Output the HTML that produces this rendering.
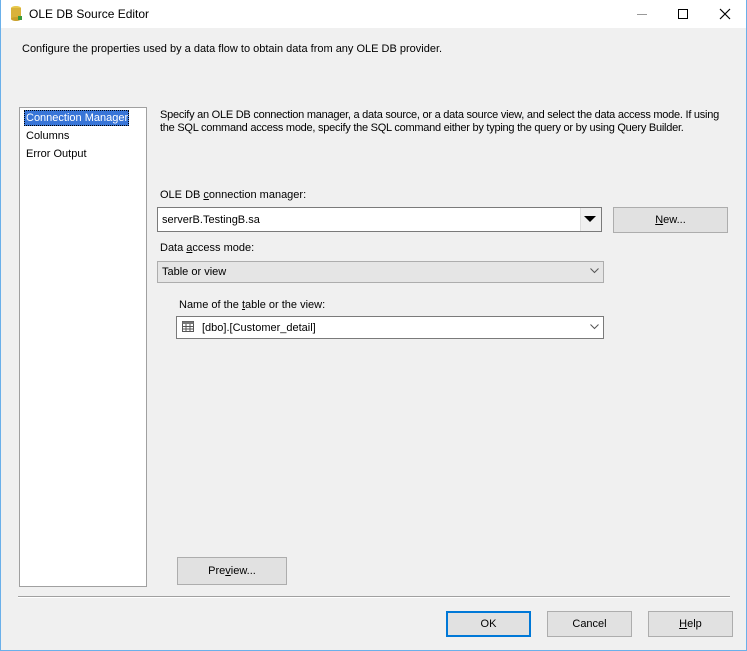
<!DOCTYPE html>
<html><head><style>
*{margin:0;padding:0;box-sizing:border-box}
body{width:747px;height:651px;overflow:hidden;background:#f0f0f0;font-family:"Liberation Sans",sans-serif;font-size:11px;color:#000;position:relative}
.a{position:absolute}
.t{position:absolute;white-space:nowrap}
.btn{position:absolute;background:#e1e1e1;border:1px solid #adadad;text-align:center;font-size:11px}
u{text-decoration:underline}
</style></head><body>
<div class="a" style="left:0;top:0;width:747px;height:651px;border:1px solid #6ab0ea;border-top:none"></div>
<div class="a" style="left:1px;top:0;width:745px;height:28px;background:#fff"></div>
<svg class="a" style="left:10px;top:5px" width="14" height="18" viewBox="0 0 14 18"><ellipse cx="6" cy="3" rx="5" ry="2" fill="#e8c84a"/><rect x="1" y="3" width="10" height="11" fill="#d9b23a"/><ellipse cx="6" cy="14" rx="5" ry="2" fill="#c9a02a"/><path d="M8 11h4v4h-4z" fill="#3a9a3a"/></svg>
<div class="t" style="left:29px;top:7px;font-size:12px">OLE DB Source Editor</div>
<div class="a" style="left:637px;top:14px;width:10px;height:1px;background:#999"></div>
<div class="a" style="left:678px;top:9px;width:10px;height:10px;border:1px solid #000"></div>
<svg class="a" style="left:719px;top:8px" width="12" height="12"><path d="M1 1L11 11M11 1L1 11" stroke="#000" stroke-width="1.2"/></svg>
<div class="t" style="left:22px;top:43px">Configure the properties used by a data flow to obtain data from any OLE DB provider.</div>
<div class="a" style="left:19px;top:107px;width:128px;height:480px;background:#fff;border:1px solid #a0a0a0"></div>
<div class="a" style="left:24px;top:110px;width:105px;height:16px;background:#3875d7;border:1px dotted #000"></div>
<div class="t" style="left:26px;top:112px;color:#fff">Connection Manager</div>
<div class="t" style="left:26px;top:130px">Columns</div>
<div class="t" style="left:26px;top:148px">Error Output</div>
<div class="t" style="left:160px;top:109px;letter-spacing:-0.25px">Specify an OLE DB connection manager, a data source, or a data source view, and select the data access mode. If using</div>
<div class="t" style="left:160px;top:122px;letter-spacing:-0.25px">the SQL command access mode, specify the SQL command either by typing the query or by using Query Builder.</div>
<div class="t" style="left:160px;top:189px">OLE DB <u>c</u>onnection manager:</div>
<div class="a" style="left:157px;top:207px;width:445px;height:25px;background:#fff;border:1px solid #7a7a7a"></div>
<div class="t" style="left:162px;top:214px">serverB.TestingB.sa</div>
<div class="a" style="left:580px;top:208px;width:21px;height:23px;background:#f0f0f0;border-left:1px solid #ddd"></div>
<svg class="a" style="left:584px;top:215px" width="12" height="8"><path d="M0 1h12L6 7z" fill="#000"/></svg>
<div class="btn" style="left:613px;top:207px;width:115px;height:26px;line-height:24px"><u>N</u>ew...</div>
<div class="t" style="left:160px;top:242px">Data <u>a</u>ccess mode:</div>
<div class="a" style="left:157px;top:261px;width:447px;height:22px;background:#e5e5e5;border:1px solid #adadad"></div>
<div class="t" style="left:162px;top:266px">Table or view</div>
<svg class="a" style="left:590px;top:268px" width="9" height="6"><path d="M0.5 0.5L4.5 4.5L8.5 0.5" stroke="#555" fill="none"/></svg>
<div class="t" style="left:179px;top:299px">Name of the <u>t</u>able or the view:</div>
<div class="a" style="left:176px;top:316px;width:428px;height:23px;background:#fff;border:1px solid #7a7a7a"></div>
<svg class="a" style="left:182px;top:321px" width="12" height="11"><rect x="0.5" y="0.5" width="11" height="10" fill="#fff" stroke="#555"/><rect x="0.5" y="0.5" width="11" height="2.5" fill="#777"/><path d="M0 5.5h12M0 8h12M4 3v8M8 3v8" stroke="#555"/></svg>
<div class="t" style="left:202px;top:322px">[dbo].[Customer_detail]</div>
<svg class="a" style="left:590px;top:324px" width="9" height="6"><path d="M0.5 0.5L4.5 4.5L8.5 0.5" stroke="#555" fill="none"/></svg>
<div class="btn" style="left:177px;top:557px;width:110px;height:28px;line-height:26px">Pre<u>v</u>iew...</div>
<div class="a" style="left:18px;top:596px;width:712px;height:1px;background:#a0a0a0"></div>
<div class="a" style="left:18px;top:597px;width:712px;height:1px;background:#fff"></div>
<div class="btn" style="left:446px;top:611px;width:85px;height:26px;line-height:23px;border:2px solid #0078d7">OK</div>
<div class="btn" style="left:547px;top:611px;width:85px;height:26px;line-height:24px">Cancel</div>
<div class="btn" style="left:648px;top:611px;width:85px;height:26px;line-height:24px"><u>H</u>elp</div>
</body></html>
